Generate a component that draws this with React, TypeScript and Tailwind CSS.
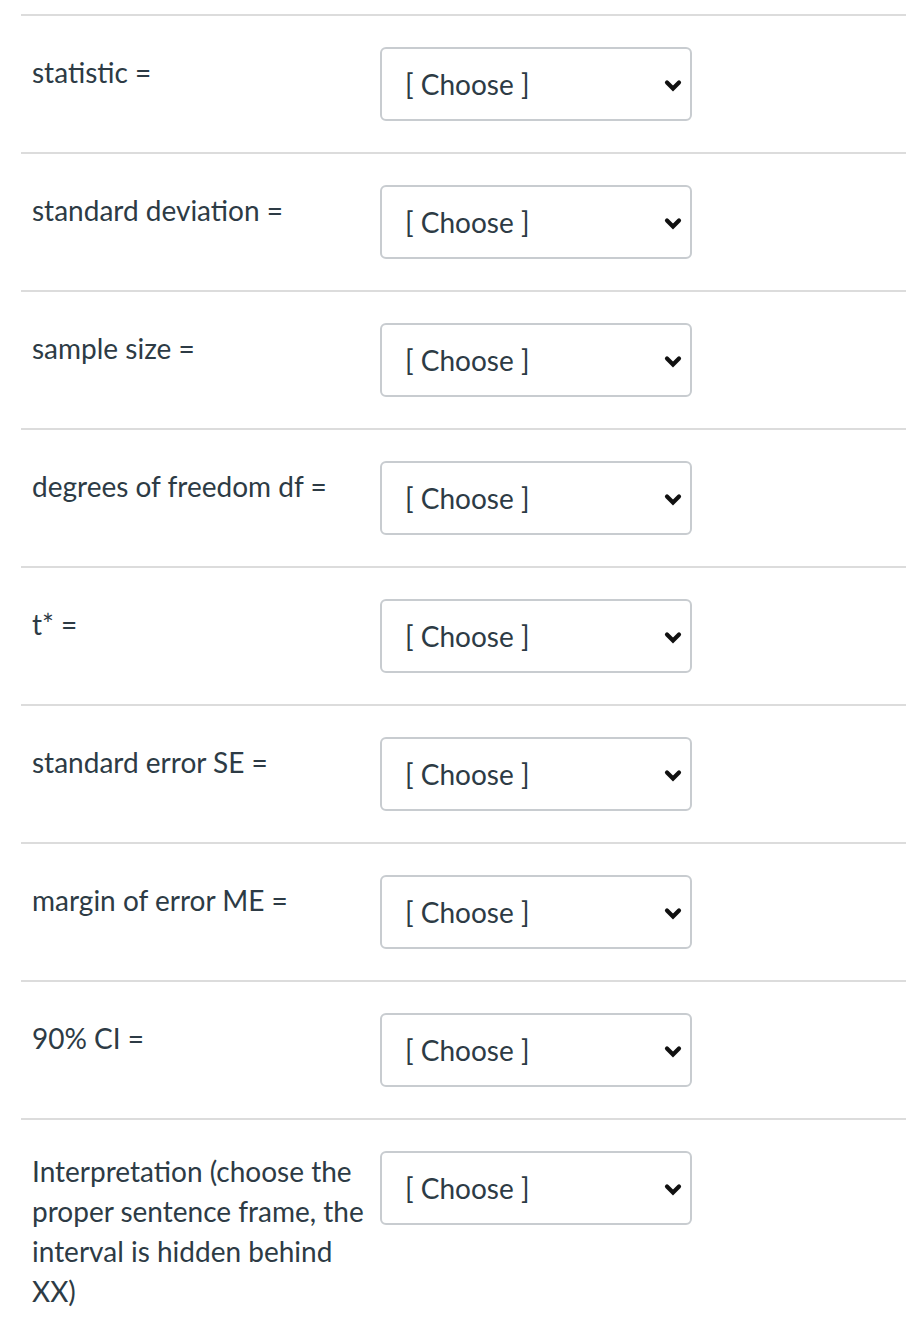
const rows = [
  { label: "statistic =" },
  { label: "standard deviation =" },
  { label: "sample size =" },
  { label: "degrees of freedom df =" },
  { label: "t* =" },
  { label: "standard error SE =" },
  { label: "margin of error ME =" },
  { label: "90% CI =" },
  {
    label:
      "Interpretation (choose the proper sentence frame, the interval is hidden behind XX)",
    multi: true,
  },
];

function ChooseBox() {
  return (
    <div className="flex h-[74px] w-[312px] shrink-0 items-center justify-between rounded-[6px] border-2 border-[#c8ccd0] bg-white pl-[23px] pr-[8px]">
      <span className="text-[28px] leading-none text-[#2d3b45]">[ Choose ]</span>
      <svg width="18" height="14" viewBox="0 0 18 14" className="mt-[3px]">
        <polyline
          points="3,3.5 9,9.5 15,3.5"
          fill="none"
          stroke="#111"
          strokeWidth="4.2"
          strokeLinecap="round"
          strokeLinejoin="miter"
        />
      </svg>
    </div>
  );
}

export default function App() {
  return (
    <div
      className="min-h-[1336px] bg-white pt-[14px] text-[#2d3b45]"
      style={{ fontFamily: "Lato, 'Open Sans', sans-serif" }}
    >
      {rows.map((r) => (
        <div
          key={r.label}
          className="ml-[21px] flex border-t-2 border-[#dcdcdc] pb-[31px] pt-[31px]"
        >
          <div
            className={
              "w-[359px] shrink-0 pl-[11px] pr-[8px] text-[28px] leading-[40px] " +
              (r.multi ? "pt-0" : "pt-[5px]")
            }
          >
            {r.label}
          </div>
          <ChooseBox />
        </div>
      ))}
    </div>
  );
}
